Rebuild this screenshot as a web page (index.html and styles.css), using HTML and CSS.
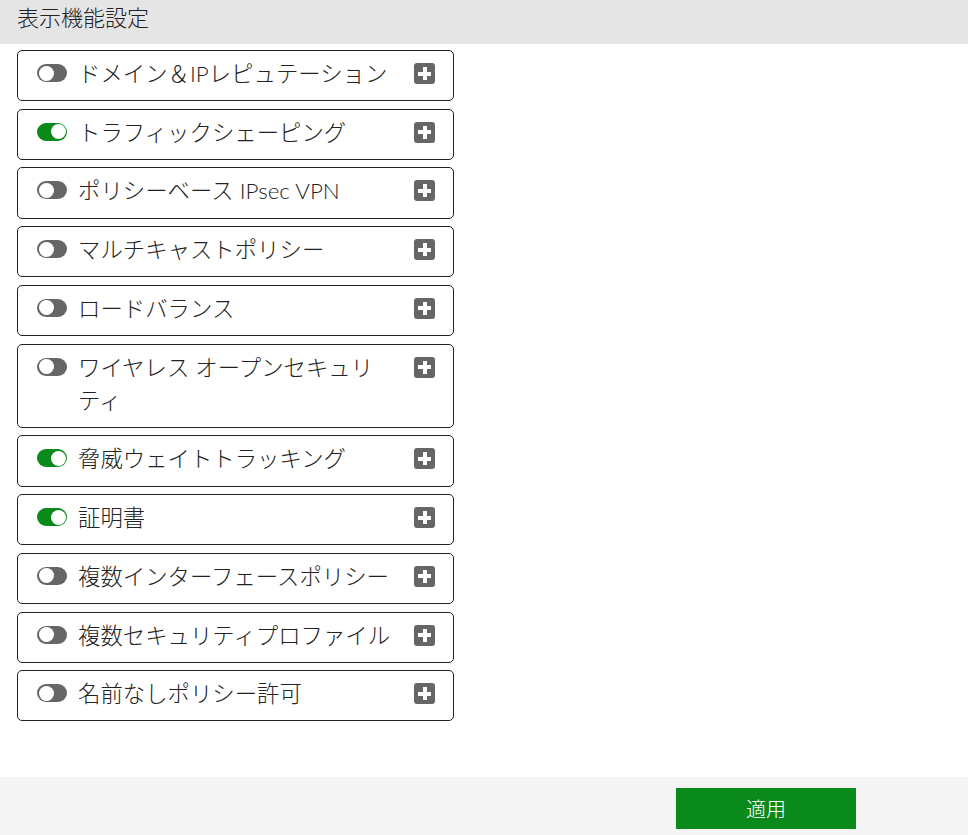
FILE: index.html
```html
<!DOCTYPE html>
<html lang="ja">
<head>
<meta charset="utf-8">
<title>表示機能設定</title>
<link rel="stylesheet" href="styles.css">
</head>
<body>
<div class="page">
  <header class="header">表示機能設定</header>
  <main class="list">
    <div class="card"><span class="toggle"></span><span class="label">ドメイン＆IPレピュテーション</span><span class="plus"></span></div>
    <div class="card"><span class="toggle on"></span><span class="label">トラフィックシェーピング</span><span class="plus"></span></div>
    <div class="card"><span class="toggle"></span><span class="label">ポリシーベース IPsec VPN</span><span class="plus"></span></div>
    <div class="card"><span class="toggle"></span><span class="label">マルチキャストポリシー</span><span class="plus"></span></div>
    <div class="card"><span class="toggle"></span><span class="label">ロードバランス</span><span class="plus"></span></div>
    <div class="card"><span class="toggle"></span><span class="label">ワイヤレス オープンセキュリティ</span><span class="plus"></span></div>
    <div class="card"><span class="toggle on"></span><span class="label">脅威ウェイトトラッキング</span><span class="plus"></span></div>
    <div class="card"><span class="toggle on"></span><span class="label">証明書</span><span class="plus"></span></div>
    <div class="card"><span class="toggle"></span><span class="label">複数インターフェースポリシー</span><span class="plus"></span></div>
    <div class="card"><span class="toggle"></span><span class="label">複数セキュリティプロファイル</span><span class="plus"></span></div>
    <div class="card"><span class="toggle"></span><span class="label">名前なしポリシー許可</span><span class="plus"></span></div>
  </main>
  <footer class="footer"><button class="apply">適用</button></footer>
</div>
</body>
</html>
```
FILE: styles.css
```css
* { box-sizing: border-box; }
html, body { margin: 0; padding: 0; }
body {
  font-family: Lato, "Noto Sans CJK JP", sans-serif;
  color: #222;
  background: #fff;
}
.page {
  display: flex;
  flex-direction: column;
  height: 100vh;
}
.header {
  height: 44px;
  background: #e5e5e5;
  padding: 0 17px;
  font-size: 22px;
  line-height: 36px;
  font-weight: 300;
}
.list {
  display: flex;
  flex-direction: column;
  gap: 7.5px;
  padding: 6px 0 0 17px;
}
.card {
  width: 437px;
  border: 1px solid #222;
  border-radius: 5px;
  padding: 6px 18px 10px 19px;
  display: flex;
  align-items: flex-start;
}
.toggle {
  position: relative;
  flex: none;
  width: 30px;
  height: 18px;
  border-radius: 9px;
  background: #666;
  margin-top: 7px;
  margin-right: 11px;
}
.toggle::after {
  content: "";
  position: absolute;
  top: 1.5px;
  left: 1.5px;
  width: 15px;
  height: 15px;
  border-radius: 50%;
  background: #fff;
}
.toggle.on { background: #0b8a1c; }
.toggle.on::after { left: 13.5px; }
.label {
  flex: 1;
  font-size: 22.4px;
  line-height: 33.2px;
  font-weight: 300;
  line-break: strict;
}
.plus {
  position: relative;
  flex: none;
  width: 21px;
  height: 21px;
  border-radius: 3px;
  background: #666;
  margin-top: 6px;
  margin-left: 12px;
}
.plus::before, .plus::after {
  content: "";
  position: absolute;
  background: #fff;
}
.plus::before { left: 4px; right: 4px; top: 8.5px; height: 4px; }
.plus::after { top: 4px; bottom: 4px; left: 8.5px; width: 4px; }
.footer {
  margin-top: auto;
  height: 58px;
  background: #f4f4f4;
  padding: 11px 0 0 676px;
}
.apply {
  width: 180px;
  height: 41px;
  border: none;
  background: #0b8a1c;
  color: #fff;
  font-family: Lato, "Noto Sans CJK JP", sans-serif;
  font-size: 20px;
  font-weight: 300;
  padding: 0;
}
```
